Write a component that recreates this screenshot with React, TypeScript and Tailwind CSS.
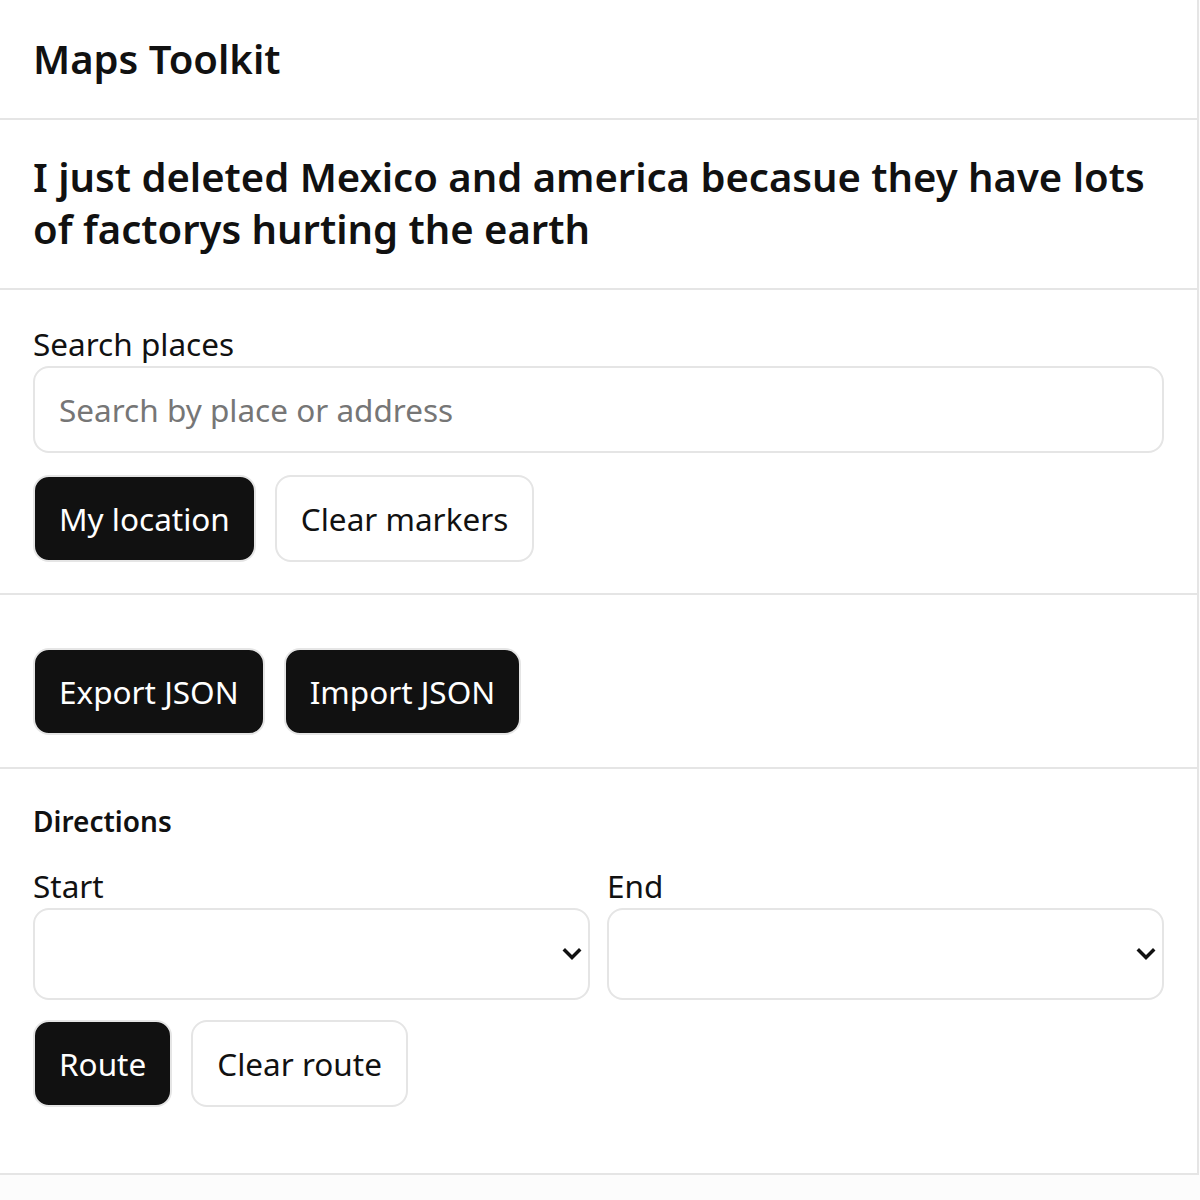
import React from "react";

function Chevron() {
  return (
    <svg
      className="pointer-events-none absolute right-[8px] top-1/2 -translate-y-1/2"
      width="20"
      height="13"
      viewBox="0 0 20 13"
      fill="none"
    >
      <path d="M3 3l7 7 7-7" stroke="#111" strokeWidth="3.5" strokeLinecap="square" strokeLinejoin="miter" />
    </svg>
  );
}

function DarkButton({ children }: { children: React.ReactNode }) {
  return (
    <button className="h-[87px] rounded-[16px] border-2 border-[#e5e5e5] bg-[#111111] px-[24px] text-[31.5px] leading-none text-white">
      {children}
    </button>
  );
}

function LightButton({ children }: { children: React.ReactNode }) {
  return (
    <button className="h-[87px] rounded-[16px] border-2 border-[#e5e5e5] bg-white px-[24px] text-[31.5px] leading-none text-[#111]">
      {children}
    </button>
  );
}

function SelectField({ label }: { label: string }) {
  return (
    <div className="flex flex-col">
      <label className="text-[31.5px] leading-[44px] text-[#111]">{label}</label>
      <div className="relative">
        <select className="h-[92px] w-full appearance-none rounded-[16px] border-2 border-[#e5e5e5] bg-white px-[24px] text-[31.5px] outline-none">
          <option value=""></option>
        </select>
        <Chevron />
      </div>
    </div>
  );
}

export default function App() {
  return (
    <div
      className="min-h-[1200px] w-[1200px] bg-[#fcfcfc]"
      style={{ fontFamily: '"Noto Sans", "Open Sans", sans-serif' }}
    >
      <aside className="w-[1199px] border-r-2 border-[#e5e5e5] bg-white text-[#111]">
        <header className="flex h-[120px] items-center border-b-2 border-[#e5e5e5] px-[33px]">
          <h1 className="text-[40px] font-semibold leading-none">Maps Toolkit</h1>
        </header>

        <section className="border-b-2 border-[#e5e5e5] px-[33px] pt-[31px] pb-[33px]">
          <h2 className="text-[40px] font-semibold leading-[52px]">
            I just deleted Mexico and america becasue they have lots of factorys hurting the earth
          </h2>
        </section>

        <section className="border-b-2 border-[#e5e5e5] px-[33px] pt-[32px] pb-[31px]">
          <label className="block text-[31.5px] leading-[44px]">Search places</label>
          <input
            type="text"
            placeholder="Search by place or address"
            className="h-[87px] w-full rounded-[16px] border-2 border-[#e5e5e5] bg-white px-[24px] text-[31.5px] text-[#111] outline-none placeholder:text-[#767676]"
          />
          <div className="mt-[22px] flex gap-[19px]">
            <DarkButton>My location</DarkButton>
            <LightButton>Clear markers</LightButton>
          </div>
        </section>

        <section className="border-b-2 border-[#e5e5e5] px-[33px] pt-[53px] pb-[32px]">
          <div className="flex gap-[19px]">
            <DarkButton>Export JSON</DarkButton>
            <DarkButton>Import JSON</DarkButton>
          </div>
        </section>

        <section className="border-b-2 border-[#e5e5e5] px-[33px] pt-[32px] pb-[66px]">
          <h3 className="text-[28px] font-semibold leading-[40px]">Directions</h3>
          <div className="mt-[23px] grid grid-cols-2 gap-[17px]">
            <SelectField label="Start" />
            <SelectField label="End" />
          </div>
          <div className="mt-[20px] flex gap-[19px]">
            <DarkButton>Route</DarkButton>
            <LightButton>Clear route</LightButton>
          </div>
        </section>
      </aside>
    </div>
  );
}
